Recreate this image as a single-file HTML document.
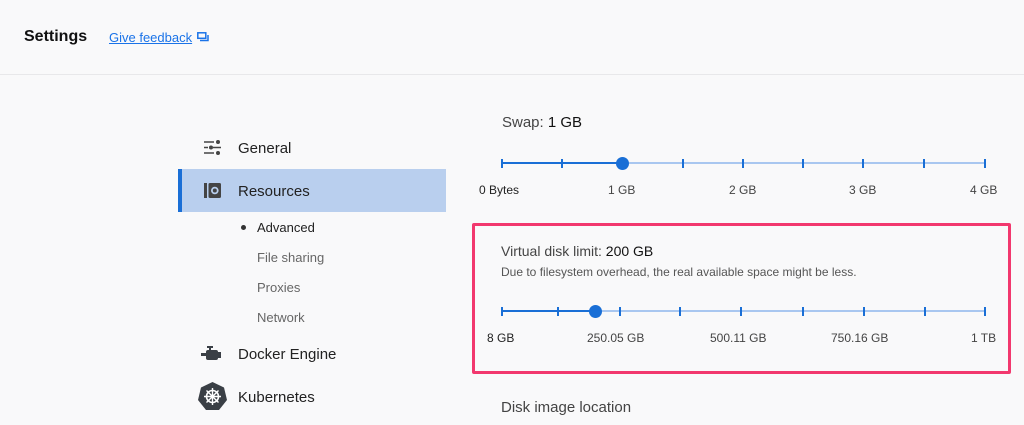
<!DOCTYPE html>
<html><head><style>
body{margin:0;width:1024px;height:425px;background:#f9f9fa;font-family:"Liberation Sans",sans-serif;position:relative;overflow:hidden;color:#1f2328}
.a{position:absolute;white-space:nowrap}
.line{position:absolute;height:2px;background:#a9c7f0}
.fill{position:absolute;height:2px;background:#1a6fd6}
.tick{position:absolute;width:2px;height:9px;background:#1a6fd6}
.thumb{position:absolute;width:13px;height:13px;border-radius:50%;background:#1a6fd6}
.lbl{position:absolute;font-size:12px;color:#444;white-space:nowrap}
.nav{font-size:15px;color:#222}
.sub{font-size:13px;color:#666}
</style></head><body>
<div class="a" style="left:24px;top:28px;font-size:16px;font-weight:bold;color:#111">Settings</div>
<div class="a" style="left:109px;top:30px;font-size:13px;color:#1a73e8;text-decoration:underline">Give feedback</div>
<svg class="a" style="left:197px;top:32px" width="12" height="11" viewBox="0 0 12 11"><rect x="0.8" y="0.8" width="8" height="5.5" fill="none" stroke="#1a73e8" stroke-width="1.5"/><path d="M3 8.5H11V3" fill="none" stroke="#1a73e8" stroke-width="1.5"/></svg>
<div class="a" style="left:0;top:74px;width:1024px;height:1px;background:#e8e8ea"></div>

<svg class="a" style="left:204px;top:140px" width="17" height="15" viewBox="0 0 17 15"><g stroke="#444" stroke-width="1.6"><path d="M0 2H10M0 7.5H4M9 7.5H17M0 13H10"/></g><circle cx="14" cy="2" r="2" fill="#444"/><circle cx="7" cy="7.5" r="2" fill="#444"/><circle cx="14" cy="13" r="2" fill="#444"/></svg>
<div class="a nav" style="left:238px;top:140px">General</div>
<div class="a" style="left:178px;top:169px;width:268px;height:43px;background:#b9cfee"></div>
<div class="a" style="left:178px;top:169px;width:4px;height:43px;background:#1a6fd6"></div>
<svg class="a" style="left:204px;top:183px" width="17" height="15" viewBox="0 0 17 15"><rect x="0" y="0" width="3" height="15" fill="#444"/><rect x="4.5" y="0" width="12.5" height="15" rx="1.5" fill="#444"/><circle cx="10.8" cy="7.5" r="3.8" fill="#b9cfee"/><circle cx="10.8" cy="7.5" r="2" fill="#444"/></svg>
<div class="a nav" style="left:238px;top:183px">Resources</div>
<div class="a" style="left:241px;top:225px;width:5px;height:5px;border-radius:50%;background:#333"></div>
<div class="a" style="left:257px;top:220px;font-size:13px;color:#222">Advanced</div>
<div class="a sub" style="left:257px;top:250px">File sharing</div>
<div class="a sub" style="left:257px;top:280px">Proxies</div>
<div class="a sub" style="left:257px;top:310px">Network</div>
<svg class="a" style="left:201px;top:346px" width="21" height="15" viewBox="0 0 21 15"><rect x="6" y="0" width="6" height="2" fill="#3a3f45"/><rect x="8" y="1" width="2" height="4" fill="#3a3f45"/><rect x="5" y="4" width="12" height="10" rx="2" fill="#3a3f45"/><rect x="0" y="7" width="6" height="3" fill="#3a3f45"/><rect x="16" y="6" width="4" height="6" fill="#3a3f45"/></svg>
<div class="a nav" style="left:238px;top:346px">Docker Engine</div>
<svg class="a" style="left:198px;top:382px" width="29" height="28" viewBox="0 0 29 28"><polygon points="14.5,0 26,5.5 29,18 21,28 8,28 0,18 3,5.5" fill="#3a3f45"/><circle cx="14.5" cy="14.5" r="6" fill="none" stroke="#fff" stroke-width="1.6"/><g stroke="#fff" stroke-width="1.4"><path d="M14.5 6V23M6 14.5H23M8.5 8.5L20.5 20.5M20.5 8.5L8.5 20.5"/></g><circle cx="14.5" cy="14.5" r="1.6" fill="#fff"/></svg>
<div class="a nav" style="left:238px;top:389px">Kubernetes</div>

<div class="a" style="left:502px;top:114px;font-size:15px;color:#444">Swap: <span style="color:#111">1 GB</span></div>
<div class="line" style="left:502px;top:162px;width:484px"></div>
<div class="fill" style="left:502px;top:162px;width:120px"></div>
<div class="tick" style="left:501px;top:159px"></div><div class="tick" style="left:561px;top:159px"></div><div class="tick" style="left:682px;top:159px"></div><div class="tick" style="left:742px;top:159px"></div><div class="tick" style="left:802px;top:159px"></div><div class="tick" style="left:862px;top:159px"></div><div class="tick" style="left:923px;top:159px"></div><div class="tick" style="left:984px;top:159px"></div>
<div class="thumb" style="left:616px;top:157px"></div>
<div class="lbl" style="left:479px;top:183px;color:#222">0 Bytes</div>
<div class="lbl" style="left:608px;top:183px">1 GB</div>
<div class="lbl" style="left:729px;top:183px">2 GB</div>
<div class="lbl" style="left:849px;top:183px">3 GB</div>
<div class="lbl" style="left:970px;top:183px">4 GB</div>

<div class="a" style="left:472px;top:223px;width:533px;height:145px;border:3px solid #f2386e;border-radius:2px"></div>
<div class="a" style="left:501px;top:243px;font-size:14px;color:#444">Virtual disk limit: <span style="color:#111">200 GB</span></div>
<div class="a" style="left:501px;top:265px;font-size:12px;color:#555">Due to filesystem overhead, the real available space might be less.</div>
<div class="line" style="left:502px;top:310px;width:484px"></div>
<div class="fill" style="left:502px;top:310px;width:93px"></div>
<div class="tick" style="left:501px;top:307px"></div><div class="tick" style="left:557px;top:307px"></div><div class="tick" style="left:619px;top:307px"></div><div class="tick" style="left:679px;top:307px"></div><div class="tick" style="left:740px;top:307px"></div><div class="tick" style="left:802px;top:307px"></div><div class="tick" style="left:863px;top:307px"></div><div class="tick" style="left:924px;top:307px"></div><div class="tick" style="left:984px;top:307px"></div>
<div class="thumb" style="left:589px;top:305px"></div>
<div class="lbl" style="left:487px;top:331px;color:#222">8 GB</div>
<div class="lbl" style="left:587px;top:331px">250.05 GB</div>
<div class="lbl" style="left:710px;top:331px">500.11 GB</div>
<div class="lbl" style="left:831px;top:331px">750.16 GB</div>
<div class="lbl" style="left:971px;top:331px">1 TB</div>

<div class="a" style="left:501px;top:399px;font-size:15px;color:#444">Disk image location</div>
</body></html>
